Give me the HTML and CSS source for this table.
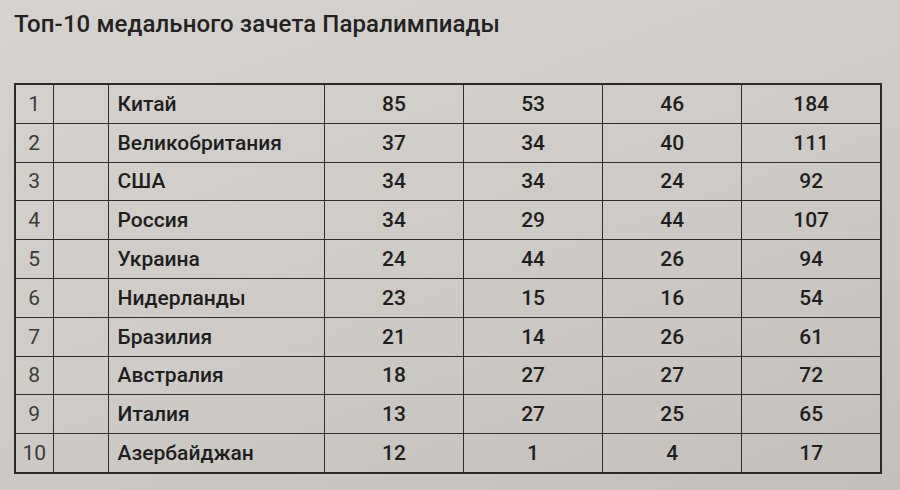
FILE: index.html
```html
<!DOCTYPE html>
<html lang="ru">
<head>
<meta charset="utf-8">
<title>Топ-10 медального зачета Паралимпиады</title>
<link rel="stylesheet" href="styles.css">
</head>
<body>
<main class="sheet">
  <h1 class="title">Топ-10 медального зачета Паралимпиады</h1>
  <table class="medals">
    <colgroup>
      <col class="c-rank"><col class="c-flag"><col class="c-name">
      <col class="c-num"><col class="c-num"><col class="c-num"><col class="c-num">
    </colgroup>
    <tbody>
      <tr><td class="rank">1</td><td></td><td class="name">Китай</td><td>85</td><td>53</td><td>46</td><td>184</td></tr>
      <tr><td class="rank">2</td><td></td><td class="name">Великобритания</td><td>37</td><td>34</td><td>40</td><td>111</td></tr>
      <tr><td class="rank">3</td><td></td><td class="name">США</td><td>34</td><td>34</td><td>24</td><td>92</td></tr>
      <tr><td class="rank">4</td><td></td><td class="name">Россия</td><td>34</td><td>29</td><td>44</td><td>107</td></tr>
      <tr><td class="rank">5</td><td></td><td class="name">Украина</td><td>24</td><td>44</td><td>26</td><td>94</td></tr>
      <tr><td class="rank">6</td><td></td><td class="name">Нидерланды</td><td>23</td><td>15</td><td>16</td><td>54</td></tr>
      <tr><td class="rank">7</td><td></td><td class="name">Бразилия</td><td>21</td><td>14</td><td>26</td><td>61</td></tr>
      <tr><td class="rank">8</td><td></td><td class="name">Австралия</td><td>18</td><td>27</td><td>27</td><td>72</td></tr>
      <tr><td class="rank">9</td><td></td><td class="name">Италия</td><td>13</td><td>27</td><td>25</td><td>65</td></tr>
      <tr><td class="rank">10</td><td></td><td class="name">Азербайджан</td><td>12</td><td>1</td><td>4</td><td>17</td></tr>
    </tbody>
  </table>
</main>
</body>
</html>
```
FILE: styles.css
```css
html, body {
  margin: 0;
  padding: 0;
}
body {
  width: 900px;
  height: 490px;
  overflow: hidden;
  background: linear-gradient(160deg, #d6d3ce 0%, #cfccc7 50%, #c3c0bb 100%);
  font-family: Roboto, "Noto Sans", sans-serif;
  color: #1c1c1c;
}
.sheet {
  padding: 9px 0 0 14px;
}
.title {
  margin: 0;
  font-size: 24px;
  font-weight: 500;
  line-height: 30px;
  color: #222;
  letter-spacing: 0.1px;
}
.medals {
  margin-top: 44px;
  border-collapse: collapse;
  table-layout: fixed;
  width: 868px;
  border: 2px solid #2a2a2a;
}
.c-rank { width: 38px; }
.c-flag { width: 55px; }
.c-name { width: 216px; }
.c-num { width: 139px; }
.medals td {
  border: 1.5px solid #2e2e2e;
  height: 37.8px;
  padding: 0;
  text-align: center;
  font-size: 21px;
  font-weight: 500;
  color: #1e1e1e;
}
.medals td.rank {
  font-weight: 400;
  color: #3a3a3a;
}
.medals td.name {
  text-align: left;
  padding-left: 9px;
}
```
